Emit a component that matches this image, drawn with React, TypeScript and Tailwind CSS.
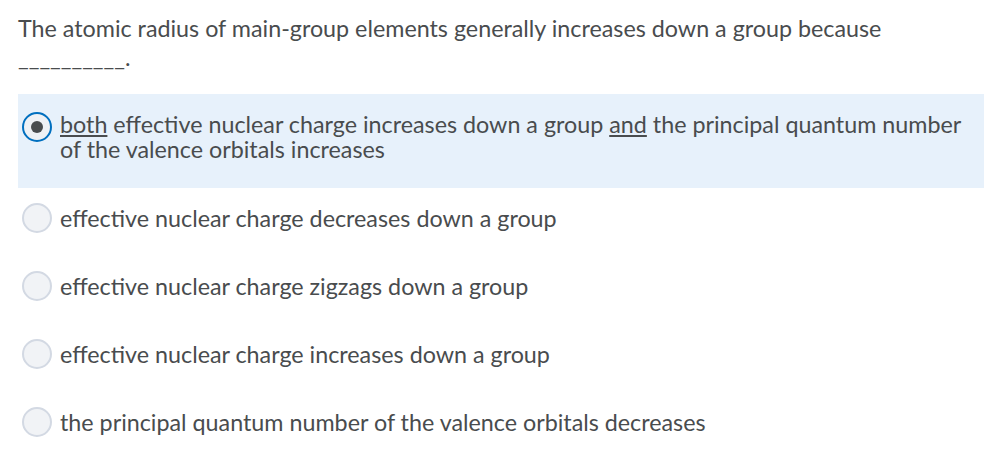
import React from 'react';

const options = [
  { id: 'a', selected: true },
  { id: 'b', text: 'effective nuclear charge decreases down a group' },
  { id: 'c', text: 'effective nuclear charge zigzags down a group' },
  { id: 'd', text: 'effective nuclear charge increases down a group' },
  { id: 'e', text: 'the principal quantum number of the valence orbitals decreases' },
];

const Radio = ({ checked }: { checked?: boolean }) => (
  <span
    className={`flex h-[30px] w-[30px] shrink-0 items-center justify-center rounded-full border-2 ${
      checked ? 'border-[#006fbf] bg-[#eef1f5]' : 'border-[#d3d9e3] bg-[#f1f3f6]'
    }`}
  >
    {checked && <span className="h-[12px] w-[12px] rounded-full bg-[#494c4e]" />}
  </span>
);

export default function App() {
  return (
    <div
      className="min-h-[460px] w-[1008px] bg-white px-[18px] pt-[14px] text-[23.3px] text-[#494c4e]"
      style={{ fontFamily: 'Lato, "Open Sans", sans-serif' }}
    >
      <p className="leading-[29px]">
        The atomic radius of main-group elements generally increases down a group because
        <br />
        __________.
      </p>

      <div className="mt-[22px] flex h-[94px] w-[966px] items-start gap-2 bg-[#e7f1fb] pl-1 pr-[18px] pt-[18px]">
        <Radio checked />
        <p className="leading-[25px]">
          <span className="underline underline-offset-2">both</span> effective nuclear charge
          increases down a group <span className="underline underline-offset-2">and</span> the
          principal quantum number of the valence orbitals increases
        </p>
      </div>

      <div className="flex flex-col gap-2">
        {options
          .filter((o) => !o.selected)
          .map((o) => (
            <label key={o.id} className="flex h-[60px] items-center gap-2 px-1">
              <Radio />
              <span className="leading-[25px]">{o.text}</span>
            </label>
          ))}
      </div>
    </div>
  );
}
